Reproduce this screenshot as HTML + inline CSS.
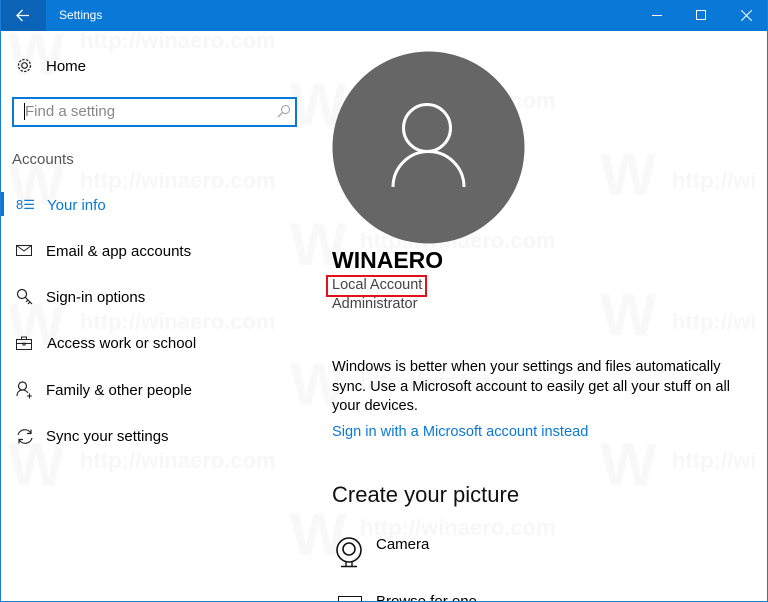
<!DOCTYPE html>
<html style="width:768px;height:602px;overflow:hidden"><head><meta charset="utf-8"><style>
*{margin:0;padding:0;box-sizing:border-box}
body{width:768px;height:602px;overflow:hidden;background:#fff;font-family:"Liberation Sans",sans-serif;position:relative;color:#000}
.frame{position:absolute;left:0;top:0;width:768px;height:602px;border:1px solid #1a7fd4;border-top:none}
.tb{position:absolute;left:0;top:0;width:768px;height:31px;background:#0a78d7}
.back{position:absolute;left:0;top:0;width:46px;height:31px;background:#0a63b6}
.t{position:absolute;font-size:15px;white-space:nowrap}
.wm{position:absolute;font-size:22px;font-weight:bold;color:#f7f7f7;white-space:nowrap}
.W{position:absolute;font-size:60px;font-weight:bold;color:#f8f8f8}
svg{position:absolute}
</style></head><body>
<div class="W" style="left:8px;top:20px">W</div><div class="wm" style="left:80px;top:28px">http://winaero.com</div>
<div class="W" style="left:8px;top:150px">W</div><div class="wm" style="left:80px;top:168px">http://winaero.com</div>
<div class="W" style="left:8px;top:290px">W</div><div class="wm" style="left:80px;top:309px">http://winaero.com</div>
<div class="W" style="left:8px;top:430px">W</div><div class="wm" style="left:80px;top:448px">http://winaero.com</div>
<div class="W" style="left:290px;top:70px">W</div><div class="wm" style="left:360px;top:88px">http://winaero.com</div>
<div class="W" style="left:290px;top:210px">W</div><div class="wm" style="left:360px;top:228px">http://winaero.com</div>
<div class="W" style="left:290px;top:350px">W</div><div class="wm" style="left:360px;top:369px">http://winaero.com</div>
<div class="W" style="left:290px;top:500px">W</div><div class="wm" style="left:360px;top:515px">http://winaero.com</div>
<div class="W" style="left:600px;top:140px">W</div><div class="wm" style="left:672px;top:168px">http://wi</div>
<div class="W" style="left:600px;top:280px">W</div><div class="wm" style="left:672px;top:309px">http://wi</div>
<div class="W" style="left:600px;top:430px">W</div><div class="wm" style="left:672px;top:448px">http://wi</div>

<div class="tb"></div><div class="back"></div>
<svg style="left:16px;top:9px" width="14" height="13"><path d="M1 6.5H13M6.5 1L1 6.5L6.5 12" stroke="#fff" stroke-width="1.3" fill="none"/></svg>
<div class="t" style="left:59px;top:8px;font-size:12px;color:#fff">Settings</div>
<div style="position:absolute;left:652px;top:15px;width:10px;height:1px;background:#fff"></div>
<div style="position:absolute;left:696px;top:10px;width:10px;height:10px;border:1px solid #fff"></div>
<svg style="left:741px;top:10px" width="11" height="11"><path d="M0 0L11 11M11 0L0 11" stroke="#fff" stroke-width="1"/></svg>

<svg style="left:16px;top:57px" width="17" height="17" viewBox="0 0 17 17"><circle cx="8.5" cy="8.5" r="2.8" fill="none" stroke="#222" stroke-width="1.2"/><circle cx="8.5" cy="8.5" r="6" fill="none" stroke="#222" stroke-width="1.2" stroke-dasharray="2.4 1.3"/></svg>
<div class="t" style="left:46px;top:58px;color:#000">Home</div>
<div style="position:absolute;left:12px;top:97px;width:285px;height:30px;border:2px solid #0a78d7;background:#fff"></div>
<div style="position:absolute;left:24px;top:103px;width:1px;height:17px;background:#000"></div>
<div class="t" style="left:25px;top:103px;color:#888">Find a setting</div>
<svg style="left:277px;top:104px" width="14" height="14"><circle cx="8.5" cy="5.5" r="4" fill="none" stroke="#999" stroke-width="1"/><path d="M5.5 8.5L1 13" stroke="#999" stroke-width="1.2"/></svg>
<div class="t" style="left:12px;top:151px;color:#555">Accounts</div>
<div style="position:absolute;left:0;top:192px;width:4px;height:24px;background:#0a78d7"></div>
<div class="t" style="left:16px;top:197px;color:#0a78d7;font-size:13px">8☰</div>
<div class="t" style="left:47px;top:197px;color:#0a78d7">Your info</div>
<svg style="left:16px;top:245px" width="17" height="12"><rect x="0.5" y="0.5" width="15" height="10" fill="none" stroke="#222"/><path d="M0.5 0.5L8 6L15.5 0.5" fill="none" stroke="#222"/></svg>
<div class="t" style="left:46px;top:243px">Email &amp; app accounts</div>
<svg style="left:16px;top:288px" width="18" height="18"><circle cx="6" cy="6" r="4.5" fill="none" stroke="#222" stroke-width="1.2"/><path d="M9 9L16 16M12 12L10 14M14 14L12 16" stroke="#222" stroke-width="1.2"/></svg>
<div class="t" style="left:46px;top:289px">Sign-in options</div>
<svg style="left:16px;top:336px" width="17" height="15"><rect x="0.5" y="3.5" width="15" height="10" fill="none" stroke="#222"/><path d="M5.5 3.5V1H10.5V3.5M0.5 7.5H15.5M7 6.5V9H9V6.5" fill="none" stroke="#222"/></svg>
<div class="t" style="left:47px;top:335px">Access work or school</div>
<svg style="left:16px;top:381px" width="17" height="18"><circle cx="6.5" cy="5" r="4" fill="none" stroke="#222" stroke-width="1.2"/><path d="M1 15C1 11 3.5 9 6.5 9S11 10.5 12 12M11 15H16M13.5 12.5V17.5" fill="none" stroke="#222" stroke-width="1.1"/></svg>
<div class="t" style="left:46px;top:382px">Family &amp; other people</div>
<svg style="left:16px;top:428px" width="18" height="17"><path d="M2 7A7 7 0 0 1 15 5.5M16 10A7 7 0 0 1 3 11.5M15 1.5V5.5H11M3 15.5V11.5H7" fill="none" stroke="#222" stroke-width="1.2"/></svg>
<div class="t" style="left:46px;top:428px">Sync your settings</div>

<svg style="left:332px;top:51px" width="193" height="193" viewBox="332 51 193 193"><circle cx="428.5" cy="147.5" r="96" fill="#666"/><circle cx="427" cy="128" r="23.5" fill="none" stroke="#fff" stroke-width="3"/><path d="M393 187A35 35 0 0 1 464 187" fill="none" stroke="#fff" stroke-width="3"/></svg>
<div class="t" style="left:332px;top:247px;font-size:23px;font-weight:bold">WINAERO</div>
<div style="position:absolute;left:326px;top:275px;width:101px;height:22px;border:2px solid #e0121a"></div>
<div class="t" style="left:332px;top:277px;color:#444;font-size:14.5px">Local Account</div>
<div class="t" style="left:332px;top:296px;color:#444;font-size:14.5px">Administrator</div>
<div class="t" style="left:332px;top:358px;line-height:19.5px;white-space:normal;width:420px;font-size:14.6px">Windows is better when your settings and files automatically sync. Use a Microsoft account to easily get all your stuff on all your devices.</div>
<div class="t" style="left:332px;top:424px;color:#0a78d7;font-size:14.6px">Sign in with a Microsoft account instead</div>
<div class="t" style="left:332px;top:482px;font-size:22px;color:#111">Create your picture</div>
<svg style="left:334px;top:536px" width="30" height="32"><circle cx="15" cy="14" r="12" fill="none" stroke="#111" stroke-width="1.6"/><circle cx="15" cy="13" r="6" fill="none" stroke="#111" stroke-width="1.6"/><path d="M12 26V30M18 26V30M7 30.5H23" stroke="#111" stroke-width="1.4"/></svg>
<div class="t" style="left:376px;top:536px">Camera</div>
<div style="position:absolute;left:338px;top:596px;width:24px;height:10px;border:1.5px solid #111"></div>
<div class="t" style="left:376px;top:593px">Browse for one</div>
<div class="frame"></div>
</body></html>
